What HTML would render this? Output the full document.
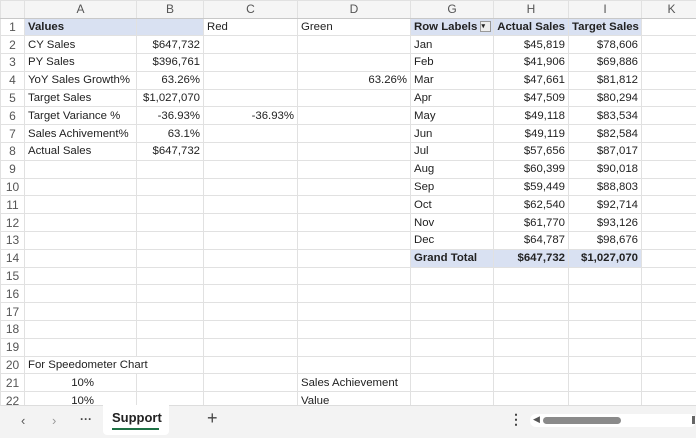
<!DOCTYPE html>
<html><head><style>
body{margin:0;width:696px;height:437px;overflow:hidden;background:#fff;font-family:"Liberation Sans",Arial,sans-serif;font-size:11.4px;color:#222;position:relative}
table{border-collapse:collapse;position:absolute;left:0;top:0;table-layout:fixed;width:701px}
td{height:17.8px;padding:0 3px;border:1px solid #e1e1e1;white-space:nowrap;overflow:hidden;line-height:16px;box-sizing:border-box}
td.rh{text-align:center;color:#555;background:#fff;padding:0;border-color:#e1e1e1;font-size:12px}
tr.ch td{background:#f5f5f5;text-align:center;color:#555;height:17.5px;border-bottom:1px solid #c8c8c8;font-size:12px}
.r{text-align:right}
.b{font-weight:bold}
.hd{background:#d9e1f2}
.tabs{position:absolute;left:0;top:405px;width:696px;height:32px;background:#f3f3f3;border-top:1px solid #ddd}
</style></head><body>
<table>
<colgroup><col style="width:24px"><col style="width:112px"><col style="width:67px"><col style="width:94px"><col style="width:113px"><col style="width:83px"><col style="width:75px"><col style="width:73px"><col style="width:60px"></colgroup>
<tr class="ch"><td></td><td>A</td><td>B</td><td>C</td><td>D</td><td>G</td><td>H</td><td>I</td><td>K</td></tr>
<tr><td class="rh">1</td><td class="b hd">Values</td><td class="hd"></td><td>Red</td><td>Green</td><td class="b hd">Row Labels <span style="display:inline-block;width:9px;height:9px;border:1px solid #999;font-size:7px;line-height:9px;vertical-align:middle;background:#eee">▾</span></td><td class="b hd r">Actual Sales</td><td class="b hd r">Target Sales</td><td></td></tr>
<tr><td class="rh">2</td><td>CY Sales</td><td class="r">$647,732</td><td></td><td></td><td>Jan</td><td class="r">$45,819</td><td class="r">$78,606</td><td></td></tr>
<tr><td class="rh">3</td><td>PY Sales</td><td class="r">$396,761</td><td></td><td></td><td>Feb</td><td class="r">$41,906</td><td class="r">$69,886</td><td></td></tr>
<tr><td class="rh">4</td><td>YoY Sales Growth%</td><td class="r">63.26%</td><td></td><td class="r">63.26%</td><td>Mar</td><td class="r">$47,661</td><td class="r">$81,812</td><td></td></tr>
<tr><td class="rh">5</td><td>Target Sales</td><td class="r">$1,027,070</td><td></td><td></td><td>Apr</td><td class="r">$47,509</td><td class="r">$80,294</td><td></td></tr>
<tr><td class="rh">6</td><td>Target Variance %</td><td class="r">-36.93%</td><td class="r">-36.93%</td><td></td><td>May</td><td class="r">$49,118</td><td class="r">$83,534</td><td></td></tr>
<tr><td class="rh">7</td><td>Sales Achivement%</td><td class="r">63.1%</td><td></td><td></td><td>Jun</td><td class="r">$49,119</td><td class="r">$82,584</td><td></td></tr>
<tr><td class="rh">8</td><td>Actual Sales</td><td class="r">$647,732</td><td></td><td></td><td>Jul</td><td class="r">$57,656</td><td class="r">$87,017</td><td></td></tr>
<tr><td class="rh">9</td><td></td><td></td><td></td><td></td><td>Aug</td><td class="r">$60,399</td><td class="r">$90,018</td><td></td></tr>
<tr><td class="rh">10</td><td></td><td></td><td></td><td></td><td>Sep</td><td class="r">$59,449</td><td class="r">$88,803</td><td></td></tr>
<tr><td class="rh">11</td><td></td><td></td><td></td><td></td><td>Oct</td><td class="r">$62,540</td><td class="r">$92,714</td><td></td></tr>
<tr><td class="rh">12</td><td></td><td></td><td></td><td></td><td>Nov</td><td class="r">$61,770</td><td class="r">$93,126</td><td></td></tr>
<tr><td class="rh">13</td><td></td><td></td><td></td><td></td><td>Dec</td><td class="r">$64,787</td><td class="r">$98,676</td><td></td></tr>
<tr><td class="rh">14</td><td></td><td></td><td></td><td></td><td class="b hd">Grand Total</td><td class="b hd r">$647,732</td><td class="b hd r">$1,027,070</td><td></td></tr>
<tr><td class="rh">15</td><td></td><td></td><td></td><td></td><td></td><td></td><td></td><td></td></tr>
<tr><td class="rh">16</td><td></td><td></td><td></td><td></td><td></td><td></td><td></td><td></td></tr>
<tr><td class="rh">17</td><td></td><td></td><td></td><td></td><td></td><td></td><td></td><td></td></tr>
<tr><td class="rh">18</td><td></td><td></td><td></td><td></td><td></td><td></td><td></td><td></td></tr>
<tr><td class="rh">19</td><td></td><td></td><td></td><td></td><td></td><td></td><td></td><td></td></tr>
<tr><td class="rh">20</td><td colspan="2">For Speedometer Chart</td><td></td><td></td><td></td><td></td><td></td><td></td></tr>
<tr><td class="rh">21</td><td class="r" style="padding-right:42px">10%</td><td></td><td></td><td>Sales Achievement</td><td></td><td></td><td></td><td></td></tr>
<tr><td class="rh">22</td><td class="r" style="padding-right:42px">10%</td><td></td><td></td><td>Value</td><td></td><td></td><td></td><td></td></tr>
</table>
<div class="tabs">
<span style="position:absolute;left:21px;top:7px;color:#555;font-size:13px">‹</span>
<span style="position:absolute;left:52px;top:7px;color:#999;font-size:13px">›</span>
<span style="position:absolute;left:80px;top:6px;color:#444;font-size:12px;font-weight:bold">···</span>
<div style="position:absolute;left:103px;top:-1px;width:66px;height:30px;background:#fff;border-radius:0 0 4px 4px"><span style="position:absolute;left:9px;top:5px;font-weight:bold;font-size:13px;color:#222">Support</span><div style="position:absolute;left:9px;top:23px;width:47px;height:2px;background:#1e7145"></div></div>
<span style="position:absolute;left:207px;top:2px;font-size:18px;color:#444">+</span>
<span style="position:absolute;left:509px;top:5px;font-size:14px;color:#444;font-weight:bold">⋮</span>
<div style="position:absolute;left:530px;top:8px;width:166px;height:13px;background:#fff;border-radius:6px"></div>
<span style="position:absolute;left:533px;top:8px;font-size:9px;color:#555">◀</span>
<div style="position:absolute;left:543px;top:11px;width:78px;height:7px;background:#8a8a8a;border-radius:4px"></div>
<div style="position:absolute;left:692px;top:10px;width:3px;height:8px;background:#666"></div>
</div>
</body></html>
